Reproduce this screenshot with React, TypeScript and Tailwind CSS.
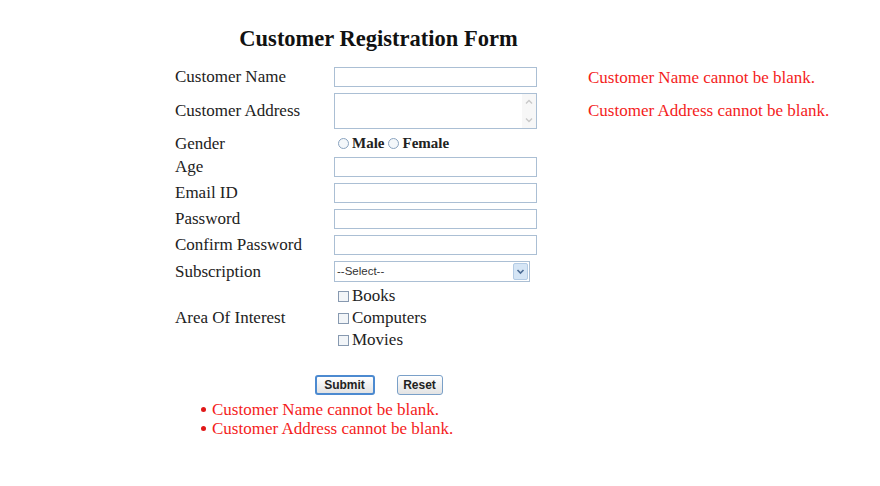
import React from 'react';

const serif = { fontFamily: '"Liberation Serif", "Times New Roman", serif' };

const TextBox: React.FC<{ type?: string }> = ({ type = 'text' }) => (
    <input
        type={type}
        className="block h-[20px] w-[203px] border border-[#abbfd4] bg-white px-1 text-[13px] outline-none"
    />
);

const Radio: React.FC<{ label: string }> = ({ label }) => (
    <span className="inline-flex items-center">
        <span className="mr-[3px] inline-block h-[11px] w-[11px] rounded-full border border-[#8aa3bf] bg-[#f4f7fa]" />
        <span className="font-bold text-[15px]">{label}</span>
    </span>
);

const Check: React.FC<{ label: string }> = ({ label }) => (
    <div className="flex h-[22px] items-center">
        <span className="ml-[4px] mr-[3px] inline-block h-[11px] w-[11px] border border-[#8799b0] bg-[#f2f5f8]" />
        <span className="text-[17px]">{label}</span>
    </div>
);

const App: React.FC = () => {
    const errors = ['Customer Name cannot be blank.', 'Customer Address cannot be blank.'];

    return (
        <div className="min-h-[486px] bg-white text-[#222]" style={serif}>
            <div className="pl-[175px] pt-[26px]">
                <h1 className="w-[407px] text-center text-[22.5px] font-bold leading-[26px] text-[#111]">
                    Customer Registration Form
                </h1>

                <div className="mt-[15px] grid grid-cols-[159px_254px_auto] text-[17px]">
                    {/* name */}
                    <div className="flex h-[26px] items-start leading-[20px]">Customer Name</div>
                    <div><TextBox /></div>
                    <div className="leading-[21px] text-[#f41c1c]">{errors[0]}</div>

                    {/* address */}
                    <div className="flex h-[40px] items-center pb-[4px]">Customer Address</div>
                    <div>
                        <div className="flex h-[36px] w-[203px] border border-[#abbfd4] bg-white">
                            <textarea className="h-full flex-1 resize-none overflow-hidden outline-none" />
                            <div className="flex w-[14px] flex-col justify-between bg-[#f7f7f7] py-[1px]">
                                <svg width="14" height="14" viewBox="0 0 14 14">
                                    <path d="M4 8.5 L7 5.5 L10 8.5" fill="none" stroke="#c8c8c8" strokeWidth="1.3" />
                                </svg>
                                <svg width="14" height="14" viewBox="0 0 14 14">
                                    <path d="M4 5.5 L7 8.5 L10 5.5" fill="none" stroke="#c8c8c8" strokeWidth="1.3" />
                                </svg>
                            </div>
                        </div>
                    </div>
                    <div className="flex h-[40px] items-center pb-[4px] text-[#f41c1c]">{errors[1]}</div>

                    {/* gender */}
                    <div className="flex h-[24px] items-center pb-[3px]">Gender</div>
                    <div className="flex h-[24px] items-center gap-[4px] pb-[3px] pl-[4px]">
                        <Radio label="Male" />
                        <Radio label="Female" />
                    </div>
                    <div />

                    {[
                        ['Age', 'text'],
                        ['Email ID', 'text'],
                        ['Password', 'password'],
                        ['Confirm Password', 'password'],
                    ].map(([label, type]) => (
                        <React.Fragment key={label}>
                            <div className="flex h-[26px] items-start leading-[20px]">{label}</div>
                            <div><TextBox type={type} /></div>
                            <div />
                        </React.Fragment>
                    ))}

                    {/* subscription */}
                    <div className="flex h-[24px] items-start leading-[21px]">Subscription</div>
                    <div>
                        <div className="flex h-[21px] w-[196px] items-center border border-[#abbfd4] bg-white">
                            <span
                                className="flex-1 pl-[2px] text-[11.5px] text-[#333]"
                                style={{ fontFamily: '"Liberation Sans", Arial, sans-serif' }}
                            >
                                --Select--
                            </span>
                            <span className="mr-[1px] flex h-[17px] w-[15px] items-center justify-center rounded-[2px] border border-[#b3cbe4] bg-[#d5e5f5]">
                                <svg width="9" height="7" viewBox="0 0 9 7">
                                    <path d="M1.5 2 L4.5 5 L7.5 2" fill="none" stroke="#4d6d95" strokeWidth="1.6" />
                                </svg>
                            </span>
                        </div>
                    </div>
                    <div />

                    {/* area of interest */}
                    <div className="flex h-[66px] items-center">Area Of Interest</div>
                    <div>
                        <Check label="Books" />
                        <Check label="Computers" />
                        <Check label="Movies" />
                    </div>
                    <div />
                </div>

                <div
                    className="mt-[24px] flex w-[407px] justify-center gap-[22px]"
                    style={{ fontFamily: '"Liberation Sans", Arial, sans-serif' }}
                >
                    <button className="h-[20px] w-[60px] rounded-[3px] border-2 border-[#4c8ad0] bg-gradient-to-b from-white to-[#e3e3e3] text-[12px] font-bold leading-none text-[#222]">
                        Submit
                    </button>
                    <button className="h-[20px] w-[46px] rounded-[3px] border border-[#7aa0c8] bg-gradient-to-b from-white to-[#e3e3e3] text-[12px] font-bold leading-none text-[#222]">
                        Reset
                    </button>
                </div>

                <ul className="mt-[5px] pl-[26px] text-[17px] leading-[19px] text-[#f41c1c]">
                    {errors.map(e => (
                        <li key={e} className="flex items-center">
                            <span className="mr-[6px] inline-block h-[5px] w-[5px] rounded-full bg-[#e01818]" />
                            {e}
                        </li>
                    ))}
                </ul>
            </div>
        </div>
    );
};

export default App;
